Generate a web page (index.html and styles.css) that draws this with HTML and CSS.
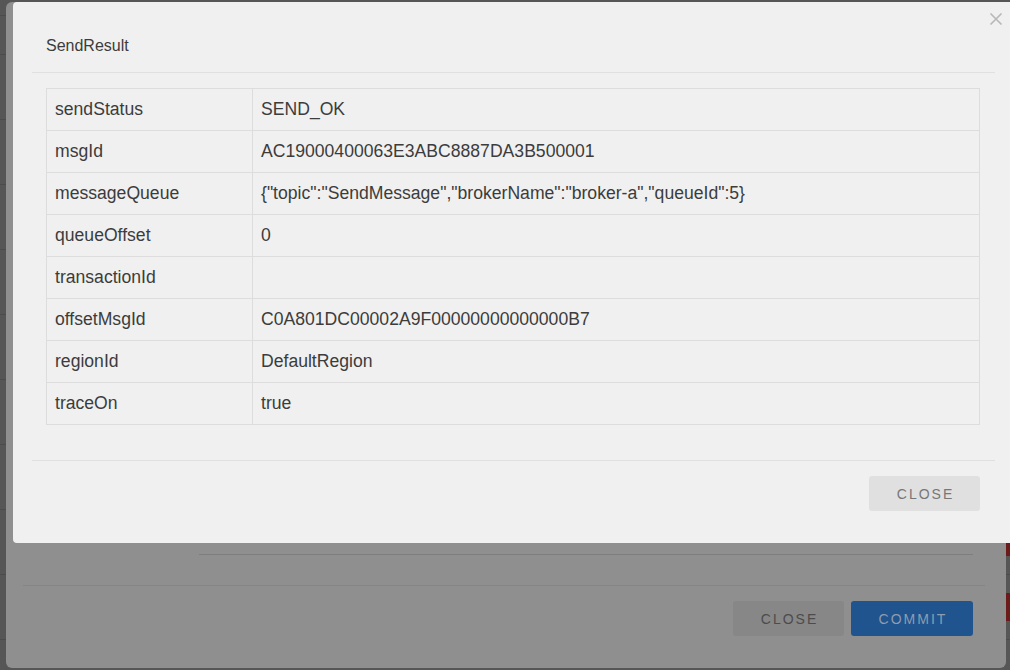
FILE: index.html
```html
<!DOCTYPE html>
<html>
<head>
<meta charset="utf-8">
<title>SendResult</title>
<link rel="stylesheet" href="styles.css">
</head>
<body>
<div class="page">
  <div class="page-row first"></div>
  <div class="page-row second"></div>
  <div class="page-row"><span class="danger"></span></div>
  <div class="page-row"><span class="danger"></span></div>
  <div class="page-row"><span class="danger"></span></div>
  <div class="page-row"><span class="danger"></span></div>
  <div class="page-row"><span class="danger"></span></div>
  <div class="page-row"><span class="danger"></span></div>
  <div class="page-row"><span class="danger"></span></div>
  <div class="page-row"><span class="danger"></span></div>
  <div class="page-row"><span class="danger"></span></div>
</div>

<div class="back-modal">
  <div class="back-body">
    <div class="field-line"></div>
  </div>
  <div class="back-footer">
    <button class="btn btn-muted">Close</button>
    <button class="btn btn-commit">Commit</button>
  </div>
</div>

<div class="modal">
  <button class="modal-x" aria-label="close">
    <svg width="14" height="14" viewBox="0 0 14 14"><path d="M1.5 1.5 L12.5 12.5 M12.5 1.5 L1.5 12.5" stroke="#b8b8b8" stroke-width="1.7" fill="none"/></svg>
  </button>
  <div class="modal-header">
    <div class="modal-title">SendResult</div>
  </div>
  <div class="modal-body">
    <table class="result">
      <tr><td class="key">sendStatus</td><td>SEND_OK</td></tr>
      <tr><td class="key">msgId</td><td>AC19000400063E3ABC8887DA3B500001</td></tr>
      <tr><td class="key">messageQueue</td><td>{"topic":"SendMessage","brokerName":"broker-a","queueId":5}</td></tr>
      <tr><td class="key">queueOffset</td><td>0</td></tr>
      <tr><td class="key">transactionId</td><td></td></tr>
      <tr><td class="key">offsetMsgId</td><td>C0A801DC00002A9F00000000000000B7</td></tr>
      <tr><td class="key">regionId</td><td>DefaultRegion</td></tr>
      <tr><td class="key">traceOn</td><td>true</td></tr>
    </table>
  </div>
  <div class="modal-footer">
    <button class="btn btn-light">Close</button>
  </div>
</div>
</body>
</html>
```

FILE: styles.css
```css
html, body {
  margin: 0;
  padding: 0;
}
body {
  width: 1010px;
  height: 670px;
  overflow: hidden;
  background: #565656;
  font-family: "Liberation Sans", Arial, sans-serif;
  position: relative;
}

/* page behind the modals */
.page {
  display: flex;
  flex-direction: column;
}
.page-row {
  height: 64px;
  border-bottom: 1px solid #4c4c4c;
  display: flex;
  justify-content: flex-end;
  align-items: flex-start;
}
.page-row.first { height: 15px; }
.page-row.second { height: 38px; }
.danger {
  display: block;
  width: 40px;
  height: 28px;
  margin-top: 18px;
  background: #6c1b1b;
}

/* back modal (dimmed) */
.back-modal {
  position: absolute;
  left: 6px;
  top: 2px;
  width: 1000px;
  height: 666px;
  background: #8f8f8f;
  border-radius: 6px;
  display: flex;
  flex-direction: column;
  justify-content: flex-end;
  box-sizing: border-box;
  padding: 0 21px 32px 17px;
}
.back-body {
  padding: 0 12px 30px 176px;
}
.field-line {
  height: 1px;
  background: #7e7e7e;
}
.back-footer {
  border-top: 1px solid #858585;
  padding: 15px 12px 0 0;
  display: flex;
  justify-content: flex-end;
  gap: 7px;
}

/* buttons */
.btn {
  font-family: "Liberation Sans", Arial, sans-serif;
  font-size: 14px;
  letter-spacing: 2px;
  text-transform: uppercase;
  border: none;
  border-radius: 3px;
  height: 35px;
  padding: 0 0 0 2px;
  cursor: pointer;
}
.btn-muted {
  width: 111px;
  background: #878787;
  color: #4c4c4c;
}
.btn-commit {
  width: 122px;
  background: #1f548f;
  color: #8e9cae;
}
.btn-light {
  width: 111px;
  background: #e0e0e0;
  color: #777777;
}

/* front modal */
.modal {
  position: absolute;
  left: 13px;
  top: 2px;
  right: 0;
  height: 541px;
  background: #f0f0f0;
  border-radius: 4px 0 0 4px;
  display: flex;
  flex-direction: column;
  padding: 0 15px 0 19px;
}
.modal-x {
  position: absolute;
  top: 9px;
  right: 6px;
  width: 16px;
  height: 16px;
  padding: 0;
  border: none;
  background: transparent;
  display: flex;
  align-items: center;
  justify-content: center;
}
.modal-header {
  height: 71px;
  box-sizing: border-box;
  padding: 34px 14px 16px;
  border-bottom: 1px solid #e0e0e0;
}
.modal-title {
  font-size: 16px;
  line-height: 20px;
  color: #3c3c3c;
}
.modal-body {
  padding: 15px 15px 35px 14px;
}
.result {
  width: 100%;
  border-collapse: collapse;
  font-size: 17.6px;
  color: #3c3c3c;
}
.result td {
  border: 1px solid #dddddd;
  padding: 8px 7px 8px 8px;
  line-height: 25px;
  height: 25px;
  white-space: nowrap;
}
.result td.key {
  width: 190px;
}
.modal-footer {
  border-top: 1px solid #e0e0e0;
  padding: 15px 15px 32px 0;
  display: flex;
  justify-content: flex-end;
}
```
